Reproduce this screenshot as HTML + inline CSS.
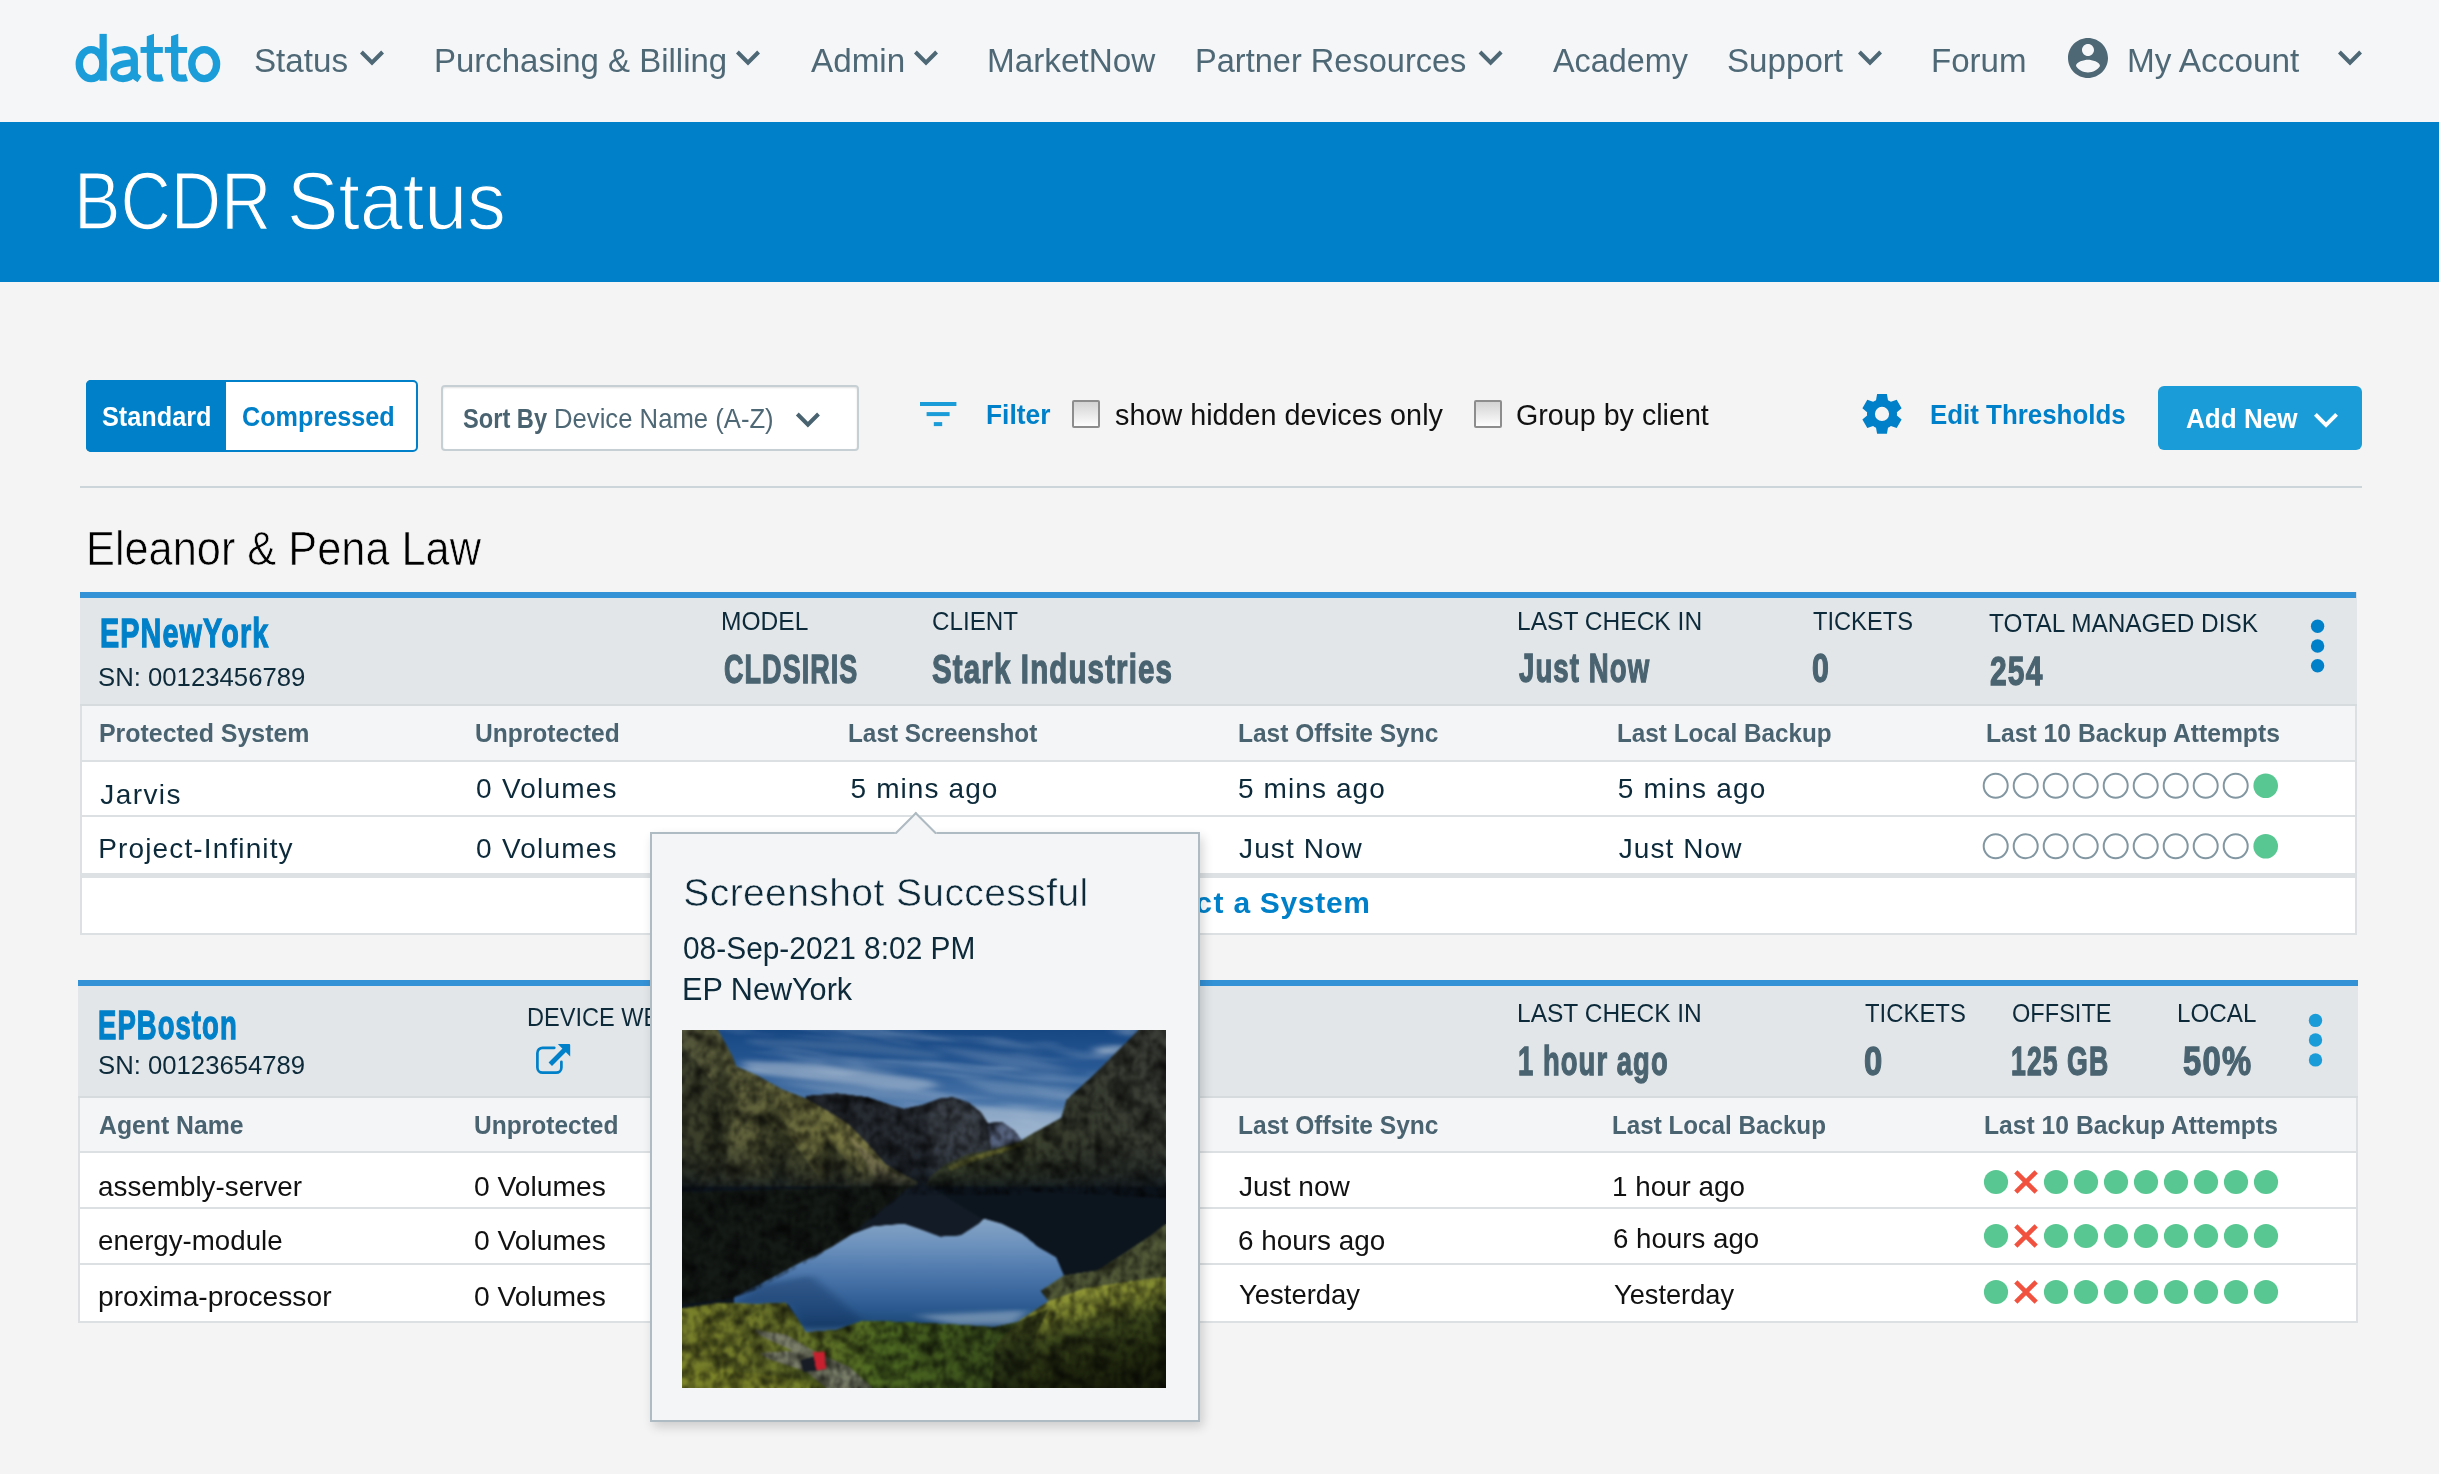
<!DOCTYPE html>
<html lang="en"><head><meta charset="utf-8"><title>BCDR Status</title>
<style>
html,body{margin:0;padding:0}
body{width:2439px;height:1474px;background:#f4f4f4;position:relative;overflow:hidden;font-family:"Liberation Sans", sans-serif;}
.b{position:absolute;box-sizing:border-box}
.t{position:absolute;white-space:nowrap;line-height:1;transform-origin:0 0;display:block}
svg.ic{position:absolute;left:0;top:0}
main.page{position:absolute;left:0;top:0;width:2439px;height:1474px;will-change:transform}
h2{margin:0;font-weight:normal;font-size:inherit}
.cb{position:absolute;width:28px;height:28px;box-sizing:border-box;border:2px solid #8d8d8d;border-radius:2px;background:linear-gradient(#d3d3d3,#fdfdfd)}
</style></head>
<body>
<main class="page">
<nav><div class="b" style="left:0px;top:0px;width:2439px;height:122px;background:#f5f6f8;"></div>
<span class="t" style="left:253.50px;top:44.00px;font-size:33px;color:#4e6876;transform:scaleX(1.0048);">Status</span>
<span class="t" style="left:433.60px;top:44.00px;font-size:33px;color:#4e6876;transform:scaleX(0.9988);">Purchasing &amp; Billing</span>
<span class="t" style="left:810.50px;top:44.00px;font-size:33px;color:#4e6876;transform:scaleX(1.0067);">Admin</span>
<span class="t" style="left:987.18px;top:44.00px;font-size:33px;color:#4e6876;transform:scaleX(1.0089);">MarketNow</span>
<span class="t" style="left:1194.93px;top:44.00px;font-size:33px;color:#4e6876;transform:scaleX(0.9864);">Partner Resources</span>
<span class="t" style="left:1552.50px;top:44.00px;font-size:33px;color:#4e6876;transform:scaleX(0.9800);">Academy</span>
<span class="t" style="left:1727.40px;top:44.00px;font-size:33px;color:#4e6876;transform:scaleX(1.0043);">Support</span>
<span class="t" style="left:1931.00px;top:44.00px;font-size:33px;color:#4e6876;transform:scaleX(1.0016);">Forum</span>
<span class="t" style="left:2127.18px;top:44.00px;font-size:33px;color:#4e6876;transform:scaleX(1.0104);">My Account</span>
</nav>
<header><div class="b" style="left:0px;top:122px;width:2439px;height:160px;background:#0080c8;"></div>
<span class="t" style="left:73.90px;top:159.50px;font-size:82px;color:#ffffff;transform:scaleX(0.8493);-webkit-text-stroke:1.4px #0080c8;">BCDR</span>
<span class="t" style="left:287.18px;top:159.50px;font-size:82px;color:#ffffff;transform:scaleX(0.9408);-webkit-text-stroke:1.4px #0080c8;">Status</span>
</header>
<div class="toolbar">
<div class="b" style="left:86px;top:380px;width:332px;height:72px;background:#fff;border:2px solid #0080c8;border-radius:5px"></div>
<div class="b" style="left:86px;top:380px;width:140px;height:72px;background:#0080c8;border-radius:5px 0 0 5px"></div>
<div class="b" style="left:441px;top:385px;width:418px;height:66px;background:#fff;border:2px solid #c6cfd4;border-radius:4px;box-shadow:inset 0 1px 2px rgba(0,0,0,.12)"></div>
<span class="cb" style="left:1072px;top:400px"></span><span class="cb" style="left:1474px;top:400px"></span>
<div class="b" style="left:2158px;top:386px;width:204px;height:64px;background:#1a9cd8;border-radius:6px"></div>
<span class="t" style="left:102.30px;top:403.50px;font-size:27px;color:#ffffff;transform:scaleX(0.9357);font-weight:700;">Standard</span>
<span class="t" style="left:241.67px;top:403.50px;font-size:27px;color:#0080c8;transform:scaleX(0.9338);font-weight:700;">Compressed</span>
<span class="t" style="left:462.50px;top:404.50px;font-size:28px;color:#4a6370;transform:scaleX(0.8440);font-weight:700;">Sort By</span>
<span class="t" style="left:553.97px;top:404.50px;font-size:28px;color:#4e6876;transform:scaleX(0.9168);">Device Name (A-Z)</span>
<span class="t" style="left:986.06px;top:400.50px;font-size:28px;color:#0080c8;transform:scaleX(0.9414);font-weight:700;">Filter</span>
<span class="t" style="left:1114.60px;top:400.50px;font-size:29px;color:#111111;transform:scaleX(0.9922);">show hidden devices only</span>
<span class="t" style="left:1515.71px;top:400.50px;font-size:29px;color:#111111;transform:scaleX(0.9887);">Group by client</span>
<span class="t" style="left:1930.08px;top:400.50px;font-size:28px;color:#0080c8;transform:scaleX(0.9248);font-weight:700;">Edit Thresholds</span>
<span class="t" style="left:2186.40px;top:404.50px;font-size:28px;color:#ffffff;transform:scaleX(0.9308);font-weight:700;">Add New</span>
</div>
<div class="b" style="left:80px;top:486px;width:2282px;height:2px;background:#ccd5da;"></div>
<h2><span class="t" style="left:85.99px;top:524.50px;font-size:48px;color:#000000;transform:scaleX(0.9026);-webkit-text-stroke:0.7px #f4f4f4;">Eleanor &amp; Pena Law</span></h2>
<section>
<div class="b" style="left:80px;top:592px;width:2277px;height:343px;background:#fff;border:2px solid #dce0e3"></div>
<div class="b" style="left:80px;top:592px;width:2276px;height:6px;background:#3391d5;"></div>
<div class="b" style="left:80px;top:598px;width:2277px;height:107.5px;background:#e2e6e9;border-bottom:2px solid #d6dbde"></div>
<div class="b" style="left:82px;top:705.5px;width:2273px;height:56px;background:#f4f5f7;border-bottom:2px solid #dce0e3"></div>
<div class="b" style="left:82px;top:815.4px;width:2273px;height:2px;background:#dce0e3;"></div>
<div class="b" style="left:82px;top:873px;width:2273px;height:4.5px;background:#dde1e4;"></div>
<span class="t" style="left:99.60px;top:612.50px;font-size:41px;color:#0080c8;transform:scaleX(0.7014);font-weight:700;letter-spacing:1.6px;-webkit-text-stroke:1.3px #0080c8;">EPNewYork</span>
<span class="t" style="left:97.51px;top:664.00px;font-size:26px;color:#0c2a3a;transform:scaleX(0.9891);">SN: 00123456789</span>
<span class="t" style="left:721.11px;top:608.00px;font-size:26px;color:#0c2a3a;transform:scaleX(0.9444);">MODEL</span>
<span class="t" style="left:931.67px;top:608.00px;font-size:26px;color:#0c2a3a;transform:scaleX(0.9304);">CLIENT</span>
<span class="t" style="left:724.14px;top:648.50px;font-size:41px;color:#4a6370;transform:scaleX(0.6583);font-weight:700;letter-spacing:1.6px;-webkit-text-stroke:1.3px #4a6370;">CLDSIRIS</span>
<span class="t" style="left:931.88px;top:648.50px;font-size:41px;color:#4a6370;transform:scaleX(0.7188);font-weight:700;letter-spacing:1.6px;-webkit-text-stroke:1.3px #4a6370;">Stark Industries</span>
<span class="t" style="left:1516.81px;top:608.00px;font-size:26px;color:#0c2a3a;transform:scaleX(0.9444);">LAST CHECK IN</span>
<span class="t" style="left:1813.20px;top:608.00px;font-size:26px;color:#0c2a3a;transform:scaleX(0.9100);">TICKETS</span>
<span class="t" style="left:1989.20px;top:610.00px;font-size:26px;color:#0c2a3a;transform:scaleX(0.9372);">TOTAL MANAGED DISK</span>
<span class="t" style="left:1518.70px;top:647.50px;font-size:41px;color:#4a6370;transform:scaleX(0.6732);font-weight:700;letter-spacing:1.6px;-webkit-text-stroke:1.3px #4a6370;">Just Now</span>
<span class="t" style="left:1812.46px;top:647.50px;font-size:41px;color:#4a6370;transform:scaleX(0.7381);font-weight:700;letter-spacing:1.6px;-webkit-text-stroke:1.3px #4a6370;">0</span>
<span class="t" style="left:1989.57px;top:650.50px;font-size:41px;color:#4a6370;transform:scaleX(0.7302);font-weight:700;letter-spacing:1.6px;-webkit-text-stroke:1.3px #4a6370;">254</span>
<span class="t" style="left:99.04px;top:720.00px;font-size:26px;color:#4a6370;transform:scaleX(0.9585);font-weight:700;">Protected System</span>
<span class="t" style="left:475.05px;top:720.00px;font-size:26px;color:#4a6370;transform:scaleX(0.9455);font-weight:700;">Unprotected</span>
<span class="t" style="left:847.56px;top:720.00px;font-size:26px;color:#4a6370;transform:scaleX(0.9359);font-weight:700;">Last Screenshot</span>
<span class="t" style="left:1237.56px;top:720.00px;font-size:26px;color:#4a6370;transform:scaleX(0.9434);font-weight:700;">Last Offsite Sync</span>
<span class="t" style="left:1617.47px;top:720.00px;font-size:26px;color:#4a6370;transform:scaleX(0.9344);font-weight:700;">Last Local Backup</span>
<span class="t" style="left:1985.65px;top:720.00px;font-size:26px;color:#4a6370;transform:scaleX(0.9490);font-weight:700;">Last 10 Backup Attempts</span>
<span class="t" style="left:100.30px;top:780.50px;font-size:28px;color:#0c2a3a;letter-spacing:1.417px;">Jarvis</span>
<span class="t" style="left:476.10px;top:774.50px;font-size:28px;color:#0c2a3a;letter-spacing:1.219px;">0 Volumes</span>
<span class="t" style="left:850.60px;top:774.50px;font-size:28px;color:#0c2a3a;letter-spacing:1.090px;">5 mins ago</span>
<span class="t" style="left:1238.10px;top:774.50px;font-size:28px;color:#0c2a3a;letter-spacing:1.079px;">5 mins ago</span>
<span class="t" style="left:1617.70px;top:774.50px;font-size:28px;color:#0c2a3a;letter-spacing:1.179px;">5 mins ago</span>
<span class="t" style="left:98.30px;top:834.50px;font-size:28px;color:#0c2a3a;letter-spacing:1.127px;">Project-Infinity</span>
<span class="t" style="left:476.10px;top:834.50px;font-size:28px;color:#0c2a3a;letter-spacing:1.219px;">0 Volumes</span>
<span class="t" style="left:850.60px;top:834.50px;font-size:28px;color:#0c2a3a;letter-spacing:1.090px;">5 mins ago</span>
<span class="t" style="left:1239.10px;top:834.50px;font-size:28px;color:#0c2a3a;letter-spacing:1.082px;">Just Now</span>
<span class="t" style="left:1618.70px;top:834.50px;font-size:28px;color:#0c2a3a;letter-spacing:1.097px;">Just Now</span>
<span class="t" style="left:1233.40px;top:887.50px;font-size:30px;color:#0080c8;letter-spacing:0.690px;font-weight:700;">a System</span>
<span class="t" style="left:1110.00px;top:887.50px;font-size:30px;color:#0080c8;letter-spacing:1.705px;font-weight:700;">Protect</span>
</section>
<section>
<div class="b" style="left:78px;top:980px;width:2280px;height:343px;background:#fff;border:2px solid #dce0e3"></div>
<div class="b" style="left:78px;top:980px;width:2280px;height:6px;background:#3391d5;"></div>
<div class="b" style="left:78px;top:986px;width:2280px;height:111.5px;background:#e2e6e9;border-bottom:2px solid #d6dbde"></div>
<div class="b" style="left:80px;top:1097.5px;width:2276px;height:55.5px;background:#f4f5f7;border-bottom:2px solid #dce0e3"></div>
<div class="b" style="left:80px;top:1207px;width:2276px;height:2px;background:#dce0e3;"></div>
<div class="b" style="left:80px;top:1263px;width:2276px;height:2px;background:#dce0e3;"></div>
<span class="t" style="left:98.06px;top:1004.50px;font-size:41px;color:#0080c8;transform:scaleX(0.6698);font-weight:700;letter-spacing:1.6px;-webkit-text-stroke:1.3px #0080c8;">EPBoston</span>
<span class="t" style="left:97.61px;top:1052.00px;font-size:26px;color:#0c2a3a;transform:scaleX(0.9882);">SN: 00123654789</span>
<span class="t" style="left:527.29px;top:1004.00px;font-size:26px;color:#0c2a3a;transform:scaleX(0.9062);">DEVICE WEB</span>
<span class="t" style="left:1517.11px;top:1000.00px;font-size:26px;color:#0c2a3a;transform:scaleX(0.9429);">LAST CHECK IN</span>
<span class="t" style="left:1864.60px;top:1000.00px;font-size:26px;color:#0c2a3a;transform:scaleX(0.9183);">TICKETS</span>
<span class="t" style="left:2011.79px;top:1000.00px;font-size:26px;color:#0c2a3a;transform:scaleX(0.9065);">OFFSITE</span>
<span class="t" style="left:2177.34px;top:1000.00px;font-size:26px;color:#0c2a3a;transform:scaleX(0.9311);">LOCAL</span>
<span class="t" style="left:1517.66px;top:1040.50px;font-size:41px;color:#4a6370;transform:scaleX(0.6681);font-weight:700;letter-spacing:1.6px;-webkit-text-stroke:1.3px #4a6370;">1 hour ago</span>
<span class="t" style="left:1863.80px;top:1040.50px;font-size:41px;color:#4a6370;transform:scaleX(0.8000);font-weight:700;letter-spacing:1.6px;-webkit-text-stroke:1.3px #4a6370;">0</span>
<span class="t" style="left:2011.40px;top:1040.50px;font-size:41px;color:#4a6370;transform:scaleX(0.6507);font-weight:700;letter-spacing:1.6px;-webkit-text-stroke:1.3px #4a6370;">125 GB</span>
<span class="t" style="left:2182.50px;top:1040.50px;font-size:41px;color:#4a6370;transform:scaleX(0.7995);font-weight:700;letter-spacing:1.6px;-webkit-text-stroke:1.3px #4a6370;">50%</span>
<span class="t" style="left:98.60px;top:1112.00px;font-size:26px;color:#4a6370;transform:scaleX(0.9535);font-weight:700;">Agent Name</span>
<span class="t" style="left:473.56px;top:1112.00px;font-size:26px;color:#4a6370;transform:scaleX(0.9436);font-weight:700;">Unprotected</span>
<span class="t" style="left:847.56px;top:1112.00px;font-size:26px;color:#4a6370;transform:scaleX(0.9359);font-weight:700;">Last Screenshot</span>
<span class="t" style="left:1237.56px;top:1112.00px;font-size:26px;color:#4a6370;transform:scaleX(0.9439);font-weight:700;">Last Offsite Sync</span>
<span class="t" style="left:1612.17px;top:1112.00px;font-size:26px;color:#4a6370;transform:scaleX(0.9313);font-weight:700;">Last Local Backup</span>
<span class="t" style="left:1983.75px;top:1112.00px;font-size:26px;color:#4a6370;transform:scaleX(0.9490);font-weight:700;">Last 10 Backup Attempts</span>
<span class="t" style="left:97.91px;top:1172.50px;font-size:28px;color:#111111;transform:scaleX(0.9934);">assembly-server</span>
<span class="t" style="left:473.99px;top:1172.50px;font-size:28px;color:#111111;transform:scaleX(1.0090);">0 Volumes</span>
<span class="t" style="left:1238.90px;top:1172.50px;font-size:28px;color:#111111;transform:scaleX(1.0038);">Just now</span>
<span class="t" style="left:1611.81px;top:1172.50px;font-size:28px;color:#111111;transform:scaleX(0.9930);">1 hour ago</span>
<span class="t" style="left:97.91px;top:1226.50px;font-size:28px;color:#111111;transform:scaleX(0.9881);">energy-module</span>
<span class="t" style="left:473.99px;top:1226.50px;font-size:28px;color:#111111;transform:scaleX(1.0090);">0 Volumes</span>
<span class="t" style="left:1237.90px;top:1226.50px;font-size:28px;color:#111111;transform:scaleX(0.9951);">6 hours ago</span>
<span class="t" style="left:1612.81px;top:1224.50px;font-size:28px;color:#111111;transform:scaleX(0.9883);">6 hours ago</span>
<span class="t" style="left:97.89px;top:1282.50px;font-size:28px;color:#111111;transform:scaleX(1.0073);">proxima-processor</span>
<span class="t" style="left:473.99px;top:1282.50px;font-size:28px;color:#111111;transform:scaleX(1.0090);">0 Volumes</span>
<span class="t" style="left:1238.90px;top:1280.50px;font-size:28px;color:#111111;transform:scaleX(0.9798);">Yesterday</span>
<span class="t" style="left:1613.80px;top:1280.50px;font-size:28px;color:#111111;transform:scaleX(0.9717);">Yesterday</span>
</section>
<svg class="ic" width="2439" height="1474" viewBox="0 0 2439 1474">
<path d="M381.18 50.60 L372.00 59.76 L362.82 50.60 L360.00 53.42 L372.00 65.42 L384.00 53.42Z" fill="#4e6876"/>
<path d="M757.18 50.60 L748.00 59.76 L738.82 50.60 L736.00 53.42 L748.00 65.42 L760.00 53.42Z" fill="#4e6876"/>
<path d="M935.18 50.60 L926.00 59.76 L916.82 50.60 L914.00 53.42 L926.00 65.42 L938.00 53.42Z" fill="#4e6876"/>
<path d="M1499.78 50.60 L1490.60 59.76 L1481.42 50.60 L1478.60 53.42 L1490.60 65.42 L1502.60 53.42Z" fill="#4e6876"/>
<path d="M1879.18 50.60 L1870.00 59.76 L1860.82 50.60 L1858.00 53.42 L1870.00 65.42 L1882.00 53.42Z" fill="#4e6876"/>
<path d="M2359.18 50.60 L2350.00 59.76 L2340.82 50.60 L2338.00 53.42 L2350.00 65.42 L2362.00 53.42Z" fill="#4e6876"/>
<path d="M817.08 412.60 L807.90 421.76 L798.72 412.60 L795.90 415.42 L807.90 427.42 L819.90 415.42Z" fill="#4a6370"/>
<path d="M2335.18 413.00 L2326.00 422.16 L2316.82 413.00 L2314.00 415.82 L2326.00 427.82 L2338.00 415.82Z" fill="#ffffff"/>
<g transform="translate(2064 34) scale(2)"><path fill="#4e6876" d="M12 2C6.48 2 2 6.48 2 12s4.48 10 10 10 10-4.48 10-10S17.52 2 12 2zm0 3c1.66 0 3 1.34 3 3s-1.34 3-3 3-3-1.34-3-3 1.34-3 3-3zm0 14.2c-2.5 0-4.71-1.28-6-3.22.03-1.99 4-3.08 6-3.08 1.99 0 5.97 1.09 6 3.08-1.29 1.94-3.5 3.22-6 3.22z"/></g>
<g transform="translate(70 26) scale(0.06562)" fill="none" stroke="#1a9dd9" stroke-width="112"><ellipse cx="322" cy="580" rx="181" ry="221"/><path d="M505 120V835" stroke-width="111"/><path d="M655 400C720 372 775 360 830 360C930 360 980 415 980 500V715C980 762 1000 772 1060 812" stroke-width="110"/><path d="M985 556C850 566 668 588 668 692C668 768 735 803 808 803C890 803 950 760 982 700" stroke-width="108"/><path d="M1225 300V700C1225 775 1268 796 1330 796C1362 796 1392 791 1412 785" stroke-width="110"/><path d="M1595 300V700C1595 775 1638 796 1700 796C1732 796 1762 791 1782 785" stroke-width="110"/><ellipse cx="2045" cy="580" rx="189" ry="221"/><g fill="#1a9dd9" stroke="none"><path d="M1170 156L1280 120V330H1170Z"/><path d="M1540 156L1650 120V330H1540Z"/><rect x="1075" y="320" width="340" height="90"/><rect x="1445" y="320" width="340" height="90"/></g></g>
<g fill="#1a9cd8"><rect x="920" y="402" width="36.4" height="4"/><rect x="926.6" y="412.1" width="23" height="4"/><rect x="933.8" y="422.1" width="8.4" height="4"/></g>
<path d="M1888.00 400.15L1886.90 394.10L1877.10 394.10L1876.00 400.15A16.2 16.2 0 0 0 1873.09 401.83L1867.30 399.76L1862.40 408.24L1867.09 412.22A16.2 16.2 0 0 0 1867.09 415.58L1862.40 419.56L1867.30 428.04L1873.09 425.97A16.2 16.2 0 0 0 1876.00 427.65L1877.10 433.70L1886.90 433.70L1888.00 427.65A16.2 16.2 0 0 0 1890.91 425.97L1896.70 428.04L1901.60 419.56L1896.91 415.58A16.2 16.2 0 0 0 1896.91 412.22L1901.60 408.24L1896.70 399.76L1890.91 401.83A16.2 16.2 0 0 0 1888.00 400.15ZM1889.10 413.90a7.1 7.1 0 1 0 -14.2 0a7.1 7.1 0 1 0 14.2 0Z" fill="#0080c8" fill-rule="evenodd"/>
<circle cx="2317.6" cy="626.2" r="6.7" fill="#0080c8"/>
<circle cx="2317.6" cy="646" r="6.7" fill="#0080c8"/>
<circle cx="2317.6" cy="665.7" r="6.7" fill="#0080c8"/>
<circle cx="2315.5" cy="1020.4" r="6.7" fill="#1a9cd8"/>
<circle cx="2315.5" cy="1040" r="6.7" fill="#1a9cd8"/>
<circle cx="2315.5" cy="1059.9" r="6.7" fill="#1a9cd8"/>
<circle cx="1995.7" cy="785.7" r="12" fill="#fff" stroke="#8297a1" stroke-width="2"/>
<circle cx="2025.7" cy="785.7" r="12" fill="#fff" stroke="#8297a1" stroke-width="2"/>
<circle cx="2055.7" cy="785.7" r="12" fill="#fff" stroke="#8297a1" stroke-width="2"/>
<circle cx="2085.7" cy="785.7" r="12" fill="#fff" stroke="#8297a1" stroke-width="2"/>
<circle cx="2115.7" cy="785.7" r="12" fill="#fff" stroke="#8297a1" stroke-width="2"/>
<circle cx="2145.7" cy="785.7" r="12" fill="#fff" stroke="#8297a1" stroke-width="2"/>
<circle cx="2175.7" cy="785.7" r="12" fill="#fff" stroke="#8297a1" stroke-width="2"/>
<circle cx="2205.7" cy="785.7" r="12" fill="#fff" stroke="#8297a1" stroke-width="2"/>
<circle cx="2235.7" cy="785.7" r="12" fill="#fff" stroke="#8297a1" stroke-width="2"/>
<circle cx="2265.7" cy="785.7" r="12.3" fill="#58c791"/>
<circle cx="1995.7" cy="846.3" r="12" fill="#fff" stroke="#8297a1" stroke-width="2"/>
<circle cx="2025.7" cy="846.3" r="12" fill="#fff" stroke="#8297a1" stroke-width="2"/>
<circle cx="2055.7" cy="846.3" r="12" fill="#fff" stroke="#8297a1" stroke-width="2"/>
<circle cx="2085.7" cy="846.3" r="12" fill="#fff" stroke="#8297a1" stroke-width="2"/>
<circle cx="2115.7" cy="846.3" r="12" fill="#fff" stroke="#8297a1" stroke-width="2"/>
<circle cx="2145.7" cy="846.3" r="12" fill="#fff" stroke="#8297a1" stroke-width="2"/>
<circle cx="2175.7" cy="846.3" r="12" fill="#fff" stroke="#8297a1" stroke-width="2"/>
<circle cx="2205.7" cy="846.3" r="12" fill="#fff" stroke="#8297a1" stroke-width="2"/>
<circle cx="2235.7" cy="846.3" r="12" fill="#fff" stroke="#8297a1" stroke-width="2"/>
<circle cx="2265.7" cy="846.3" r="12.3" fill="#58c791"/>
<circle cx="1996" cy="1182" r="12.1" fill="#58c791"/>
<path d="M2015.8 1171.8L2036.2 1192.2M2036.2 1171.8L2015.8 1192.2" stroke="#f0523f" stroke-width="4.6" fill="none"/>
<circle cx="2056" cy="1182" r="12.1" fill="#58c791"/>
<circle cx="2086" cy="1182" r="12.1" fill="#58c791"/>
<circle cx="2116" cy="1182" r="12.1" fill="#58c791"/>
<circle cx="2146" cy="1182" r="12.1" fill="#58c791"/>
<circle cx="2176" cy="1182" r="12.1" fill="#58c791"/>
<circle cx="2206" cy="1182" r="12.1" fill="#58c791"/>
<circle cx="2236" cy="1182" r="12.1" fill="#58c791"/>
<circle cx="2266" cy="1182" r="12.1" fill="#58c791"/>
<circle cx="1996" cy="1236" r="12.1" fill="#58c791"/>
<path d="M2015.8 1225.8L2036.2 1246.2M2036.2 1225.8L2015.8 1246.2" stroke="#f0523f" stroke-width="4.6" fill="none"/>
<circle cx="2056" cy="1236" r="12.1" fill="#58c791"/>
<circle cx="2086" cy="1236" r="12.1" fill="#58c791"/>
<circle cx="2116" cy="1236" r="12.1" fill="#58c791"/>
<circle cx="2146" cy="1236" r="12.1" fill="#58c791"/>
<circle cx="2176" cy="1236" r="12.1" fill="#58c791"/>
<circle cx="2206" cy="1236" r="12.1" fill="#58c791"/>
<circle cx="2236" cy="1236" r="12.1" fill="#58c791"/>
<circle cx="2266" cy="1236" r="12.1" fill="#58c791"/>
<circle cx="1996" cy="1292" r="12.1" fill="#58c791"/>
<path d="M2015.8 1281.8L2036.2 1302.2M2036.2 1281.8L2015.8 1302.2" stroke="#f0523f" stroke-width="4.6" fill="none"/>
<circle cx="2056" cy="1292" r="12.1" fill="#58c791"/>
<circle cx="2086" cy="1292" r="12.1" fill="#58c791"/>
<circle cx="2116" cy="1292" r="12.1" fill="#58c791"/>
<circle cx="2146" cy="1292" r="12.1" fill="#58c791"/>
<circle cx="2176" cy="1292" r="12.1" fill="#58c791"/>
<circle cx="2206" cy="1292" r="12.1" fill="#58c791"/>
<circle cx="2236" cy="1292" r="12.1" fill="#58c791"/>
<circle cx="2266" cy="1292" r="12.1" fill="#58c791"/>
<g fill="none" stroke="#0080c8"><path d="M554.3 1047.8H542.6a5.2 5.2 0 0 0 -5.2 5.2V1067.5a5.2 5.2 0 0 0 5.2 5.2H556.2a5.2 5.2 0 0 0 5.2 -5.2V1061.8" stroke-width="2.7" stroke-linecap="round"/><path d="M550.3 1064.3L565.2 1049.3" stroke-width="4.8"/></g><path d="M557.8 1044h11.4a1 1 0 0 1 1 1v11.6z" fill="#0080c8"/>
</svg>
<aside>
<div class="b" style="left:650px;top:832px;width:550px;height:590px;background:#f4f5f7;border:2px solid #afbbc2;box-shadow:3px 5px 10px rgba(0,0,0,.16)"></div>
<div class="b" style="left:900.7px;top:818.2px;width:29.6px;height:29.6px;background:#f4f5f7;border-left:2px solid #aebac1;border-top:2px solid #aebac1;transform:rotate(45deg)"></div>
<div class="b" style="left:652px;top:834px;width:546px;height:30px;background:#f4f5f7;"></div>
<div class="b" style="left:682px;top:1030px;width:484px;height:358px;overflow:hidden"><svg width="484" height="358" viewBox="0 0 1876 1386" preserveAspectRatio="none">
<defs>
<linearGradient id="sky" x1="0" y1="0" x2="0" y2="1"><stop offset="0" stop-color="#184884"/><stop offset=".1" stop-color="#285893"/><stop offset=".2" stop-color="#4874a8"/><stop offset=".3" stop-color="#7f9fc3"/><stop offset=".45" stop-color="#a2b9cf"/></linearGradient>
<linearGradient id="lake" gradientUnits="userSpaceOnUse" x1="0" y1="730" x2="0" y2="1170"><stop offset="0" stop-color="#86a5c6"/><stop offset=".25" stop-color="#6a90bc"/><stop offset=".55" stop-color="#4571a7"/><stop offset=".8" stop-color="#2b598f"/><stop offset=".93" stop-color="#1d4878"/><stop offset="1" stop-color="#456d98"/></linearGradient>
<linearGradient id="lm" gradientUnits="userSpaceOnUse" x1="0" y1="300" x2="800" y2="300"><stop offset="0" stop-color="#53553a"/><stop offset=".35" stop-color="#62643c"/><stop offset=".7" stop-color="#747440"/><stop offset="1" stop-color="#827e48"/></linearGradient>
<linearGradient id="rm" gradientUnits="userSpaceOnUse" x1="1000" y1="600" x2="1800" y2="100"><stop offset="0" stop-color="#4a5230"/><stop offset=".3" stop-color="#40472e"/><stop offset=".6" stop-color="#383d30"/><stop offset="1" stop-color="#3a3d36"/></linearGradient>
<linearGradient id="fg" gradientUnits="userSpaceOnUse" x1="0" y1="1060" x2="1300" y2="1386"><stop offset="0" stop-color="#7b822a"/><stop offset=".3" stop-color="#6c762a"/><stop offset=".6" stop-color="#4f6c22"/><stop offset="1" stop-color="#33461a"/></linearGradient>
<linearGradient id="rh" gradientUnits="userSpaceOnUse" x1="1500" y1="1000" x2="1600" y2="1386"><stop offset="0" stop-color="#949a38"/><stop offset=".25" stop-color="#7d862f"/><stop offset=".45" stop-color="#3d491c"/><stop offset=".8" stop-color="#222a0e"/><stop offset="1" stop-color="#1a200b"/></linearGradient>
<filter id="nz" x="0" y="0" width="100%" height="100%" color-interpolation-filters="sRGB"><feTurbulence type="fractalNoise" baseFrequency=".04 .028" numOctaves="3" seed="11"/><feColorMatrix type="matrix" values="1.15 0 0 0 .28  1.15 0 0 0 .28  1.15 0 0 0 .28  0 0 0 0 1"/></filter>
<filter id="b14" color-interpolation-filters="sRGB"><feGaussianBlur stdDeviation="22 9"/></filter>
<filter id="b3" x="0" y="0" width="100%" height="100%" color-interpolation-filters="sRGB"><feGaussianBlur stdDeviation="4"/></filter>
<filter id="cl" x="0" y="0" width="100%" height="100%" color-interpolation-filters="sRGB"><feTurbulence type="fractalNoise" baseFrequency=".0022 .018" numOctaves="3" seed="5"/><feColorMatrix type="matrix" values="0 0 0 0 .82  0 0 0 0 .87  0 0 0 0 .92  2.8 0 0 0 -1.32"/></filter>
<filter id="b8" color-interpolation-filters="sRGB"><feGaussianBlur stdDeviation="9"/></filter>
<clipPath id="land"><path d="M480 255L600 245L720 260L810 290L860 305L930 290L1000 265L1050 260L1110 280L1160 320L1185 360L1240 355L1290 390L1320 430L1320 640L480 640Z"/><path d="M0 0L140 0L195 100L210 140L290 175L390 230L480 265L560 310L640 360L720 440L790 520L860 560L915 588L905 605L0 630Z"/><path d="M1876 0L1770 0L1710 60L1600 170L1490 270L1470 340L1360 400L1310 430L1210 460L1110 480L1020 520L960 570L945 605L1876 650Z"/><path d="M1876 750L1810 800L1720 860L1610 930L1480 950L1390 1010L1420 1050L1360 1090L1300 1130L1210 1150L1060 1140L860 1130L700 1125L600 1160L480 1170L450 1120L400 1055L290 1060L140 1056L0 1078V1386H1876Z"/><path d="M0 628L905 602L700 760L520 880L300 1000L200 1040L0 1062Z"/></clipPath>
<linearGradient id="sh" gradientUnits="userSpaceOnUse" x1="0" y1="430" x2="0" y2="625"><stop offset="0" stop-color="#0c141d" stop-opacity="0"/><stop offset=".6" stop-color="#0c141d" stop-opacity=".35"/><stop offset="1" stop-color="#0c141d" stop-opacity=".9"/></linearGradient>
<filter id="nz2" x="0" y="0" width="100%" height="100%" color-interpolation-filters="sRGB"><feTurbulence type="fractalNoise" baseFrequency=".012 .016" numOctaves="2" seed="3"/><feColorMatrix type="matrix" values="1.7 0 0 0 .05  1.7 0 0 0 .05  1.7 0 0 0 .05  0 0 0 0 1"/></filter>
<clipPath id="mtn"><path d="M480 255L600 245L720 260L810 290L860 305L930 290L1000 265L1050 260L1110 280L1160 320L1185 360L1240 355L1290 390L1320 430L1320 640L480 640Z"/><path d="M0 0L140 0L195 100L210 140L290 175L390 230L480 265L560 310L640 360L720 440L790 520L860 560L915 588L905 605L0 630Z"/><path d="M1876 0L1770 0L1710 60L1600 170L1490 270L1470 340L1360 400L1310 430L1210 460L1110 480L1020 520L960 570L945 605L1876 650Z"/></clipPath>
</defs>
<g id="sc">
<rect width="1876" height="1386" fill="url(#sky)"/>
<g filter="url(#b14)" fill="#c9d4e0">
<path d="M230 120L520 128L960 195L1000 218L900 235L500 195L260 168Z" opacity=".5"/>
<path d="M330 195L700 218L1100 262L1000 282L600 252Z" opacity=".25"/>
<path d="M250 35L700 45L1000 90L1000 110L700 85L300 60Z" opacity=".15"/>
<path d="M950 60L1350 105L1520 160L1250 145Z" opacity=".2"/>
<path d="M1050 180L1500 225L1580 275L1200 245Z" opacity=".22"/>
<path d="M1600 68L1720 60L1690 92L1605 100Z" opacity=".6"/>
<path d="M1660 0L1780 0L1740 22Z" opacity=".5"/>
<path d="M1080 290L1500 320L1420 420L1180 410Z" opacity=".45"/>
</g>
<g transform="rotate(5 900 200)"><rect x="-100" y="-150" width="2100" height="700" filter="url(#cl)" opacity=".28"/></g>
<g>
<path d="M480 255L600 245L720 260L810 290L860 305L930 290L1000 265L1050 260L1110 280L1160 320L1185 360L1240 355L1290 390L1320 430L1320 640L480 640Z" fill="#272c33"/>
<path d="M960 300L1000 275L1050 268L1110 288L1150 325L1180 380L1190 470L1010 560L960 560Z" fill="#3d434c" filter="url(#b8)"/>
<path d="M1185 360L1240 355L1290 390L1320 430L1200 470Z" fill="#586581"/>
<path d="M0 0L140 0L195 100L210 140L290 175L390 230L480 265L560 310L640 360L720 440L790 520L860 560L915 588L905 605L0 630Z" fill="url(#lm)"/>
<path d="M0 60L120 200L160 420L60 600L0 620Z" fill="#20261b" opacity=".45"/>
<path d="M300 330L420 420L520 560L380 600L300 480Z" fill="#1d2218" opacity=".4"/>
<path d="M560 430L700 560L620 600L520 500Z" fill="#23281a" opacity=".35"/>
<path d="M150 90L200 260L170 560L120 600L110 300Z" fill="#161b12" opacity=".45" filter="url(#b8)"/>
<path d="M330 220L420 420L400 600L340 600L350 400Z" fill="#161b12" opacity=".4" filter="url(#b8)"/>
<path d="M520 330L640 520L620 600L560 600L560 480Z" fill="#161b12" opacity=".35" filter="url(#b8)"/>
<path d="M640 400L800 545L900 590L760 590Z" fill="#a89c74" opacity=".45"/>
<path d="M1876 0L1770 0L1710 60L1600 170L1490 270L1470 340L1360 400L1310 430L1210 460L1110 480L1020 520L960 570L945 605L1876 650Z" fill="url(#rm)"/>
<path d="M1030 528L1120 490L1300 440L1325 448L1140 506L1040 545Z" fill="#8a8a36" opacity=".7"/>
</g>
<rect y="430" width="1876" height="225" fill="url(#sh)" clip-path="url(#mtn)"/>
<rect y="606" width="1876" height="552" fill="#0c141d"/>
<path d="M0 628L905 602L700 760L520 880L300 1000L200 1040L0 1062Z" fill="#141a16"/>
<path d="M680 772L880 610L960 606L1170 735L1100 800L1000 812L920 775L740 770Z" fill="#131b26"/>
<path d="M200 1035L290 990L440 910L580 840L660 790L740 760L860 750L920 770L1000 800L1080 795L1150 750L1170 730L1240 750L1320 790L1380 840L1450 880L1480 950L1440 980L1390 1010L1420 1050L1360 1090L1300 1130L1210 1150L1060 1140L860 1130L700 1125L600 1160L480 1170L450 1120L410 1060L200 1062Z" fill="url(#lake)"/>
<path d="M200 1062L410 1060L480 1170L600 1160L700 1125L500 950L290 990Z" fill="#0d2a52" opacity=".35" filter="url(#b14)"/>
<path d="M900 1105L1340 1085L1290 1140L1060 1142Z" fill="#a9bed2" opacity=".55" filter="url(#b14)"/>
<g>
<path d="M1876 750L1810 800L1720 860L1610 930L1480 950L1390 1010L1420 1050L1560 1010L1876 970Z" fill="#525a38"/>
<path d="M1420 1050L1560 1000L1720 975L1876 955L1876 1386L1200 1386L1210 1220L1300 1130L1360 1090Z" fill="url(#rh)"/>
<path d="M0 1078L140 1056L290 1060L400 1055L450 1120L480 1170L600 1160L700 1125L860 1130L1060 1140L1210 1150L1300 1130L1212 1222L1202 1386L0 1386Z" fill="url(#fg)"/>
<path d="M1300 1130L1420 1080L1340 1250L1300 1386L1200 1386L1212 1222Z" fill="#222c12" opacity=".7"/>
<path d="M0 1300L300 1330L700 1386L0 1386Z" fill="#8a9128" opacity=".4"/>
<path d="M280 1160L400 1178L520 1248L650 1305L740 1386L560 1386L480 1322L330 1272L300 1250L430 1242L300 1182Z" fill="#7f8176" opacity=".85"/>
</g>
<rect width="1876" height="1386" filter="url(#nz)" clip-path="url(#land)" style="mix-blend-mode:multiply"/>
<rect width="1876" height="1386" filter="url(#nz2)" clip-path="url(#land)" style="mix-blend-mode:multiply"/>
<path d="M458 1278L520 1262L530 1318L470 1324Z" fill="#171c25"/>
<path d="M508 1248L552 1244L558 1312L520 1318Z" fill="#c7202e"/>
</g>
<use href="#sc" filter="url(#b3)"/>
</svg>
</div>
<span class="t" style="left:683.30px;top:873.00px;font-size:39px;color:#0c2a3a;letter-spacing:0.408px;-webkit-text-stroke:0.6px #f4f5f7;">Screenshot Successful</span>
<span class="t" style="left:683.34px;top:933.00px;font-size:31px;color:#0c2a3a;transform:scaleX(0.9641);">08-Sep-2021 8:02 PM</span>
<span class="t" style="left:682.33px;top:974.00px;font-size:31px;color:#0c2a3a;transform:scaleX(0.9873);">EP NewYork</span>
</aside>
</main>
</body></html>
